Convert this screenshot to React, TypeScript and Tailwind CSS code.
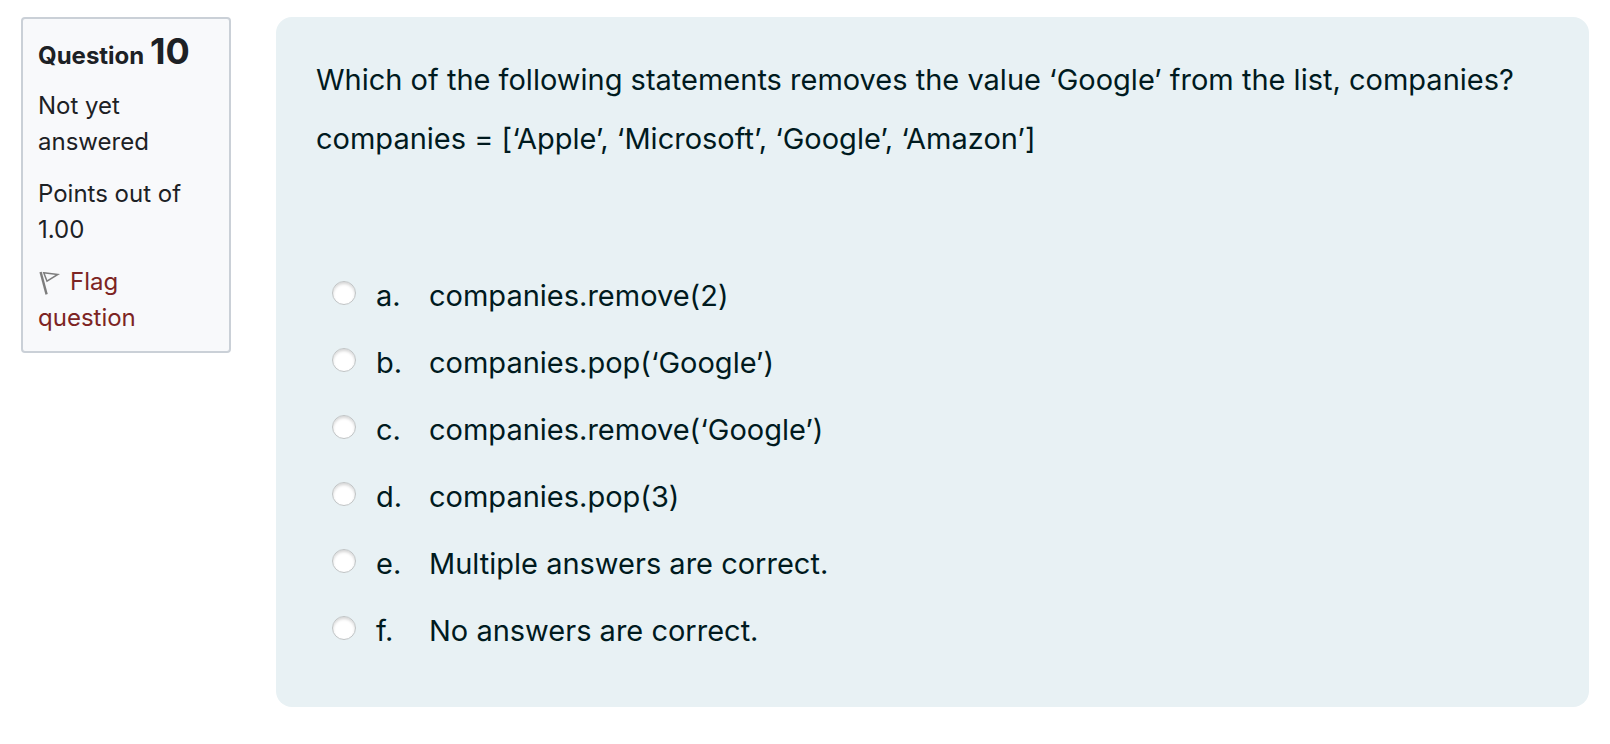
import React, { useState } from "react";

interface Answer {
  letter: string;
  text: string;
}

const answers: Answer[] = [
  { letter: "a", text: "companies.remove(2)" },
  { letter: "b", text: "companies.pop(‘Google’)" },
  { letter: "c", text: "companies.remove(‘Google’)" },
  { letter: "d", text: "companies.pop(3)" },
  { letter: "e", text: "Multiple answers are correct." },
  { letter: "f", text: "No answers are correct." },
];

const FlagIcon: React.FC = () => (
  <svg
    width="24"
    height="24"
    viewBox="0 0 24 24"
    fill="none"
    stroke="#7d7d7d"
    className="mr-2 inline-block align-[-5px]"
    aria-hidden="true"
  >
    <path d="M2.6 1 L8.6 23.4" strokeWidth="2.4" />
    <path d="M5.8 1.8 L19.8 3.4 L9 10.2 Z" strokeWidth="1.5" />
  </svg>
);

const QuestionInfo: React.FC = () => (
  <aside className="w-[210px] shrink-0 rounded-[4px] border-2 border-[#cad0d7] bg-[#f8f9fb] px-[15px] pt-[10px] pb-[15px] text-[24px] leading-9 text-[#1d2125]">
    <h3 className="mb-[10px] font-bold leading-[44px]">
      Question <span className="text-[36px]">10</span>
    </h3>
    <div className="mb-4">Not yet answered</div>
    <div className="mb-4">Points out of 1.00</div>
    <a href="#flag" className="block text-[#7d2423]">
      <FlagIcon />
      Flag question
    </a>
  </aside>
);

const App: React.FC = () => {
  const [selected, setSelected] = useState<string | null>(null);

  return (
    <div className="flex items-start gap-[45px] bg-white py-[17px] pr-[21px] pl-[21px] font-['Inter','Liberation_Sans',sans-serif]">
      <QuestionInfo />

      <form className="min-w-0 flex-1 rounded-2xl bg-[#e8f1f4] px-10 pt-10 pb-[54px] text-[29px] leading-[45px] text-[#001a1e]">
        <p className="mb-[14px]">
          Which of the following statements removes the value ‘Google’ from the list, companies?
        </p>
        <p>companies = [‘Apple’, ‘Microsoft’, ‘Google’, ‘Amazon’]</p>

        <fieldset className="mt-[112px] flex flex-col gap-[22px] pl-4">
          {answers.map((answer) => (
            <div key={answer.letter} className="flex items-start">
              <input
                type="radio"
                id={`answer-${answer.letter}`}
                name="answer"
                value={answer.letter}
                checked={selected === answer.letter}
                onChange={() => setSelected(answer.letter)}
                className="mt-2 mr-5 size-6 shrink-0 appearance-none rounded-full border border-[#c0c4c5] bg-white shadow-[inset_0_2px_3px_rgba(0,0,0,0.16)] checked:border-[7px] checked:border-[#0f6cbf]"
              />
              <label htmlFor={`answer-${answer.letter}`} className="flex">
                <span className="w-[53px] shrink-0">{answer.letter}.</span>
                <span>{answer.text}</span>
              </label>
            </div>
          ))}
        </fieldset>
      </form>
    </div>
  );
};

export default App;
